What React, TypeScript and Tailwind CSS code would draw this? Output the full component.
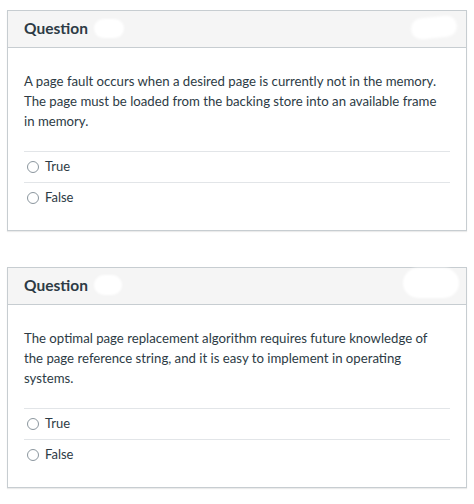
import React from 'react';

interface QuestionProps {
  text: string;
  blobLeft: string;
  blobRight: string;
}

const Blob = ({ className }: { className: string }) => (
  <div className={`absolute bg-white rounded-full blur-[1px] ${className}`} />
);

const Option = ({ label }: { label: string }) => (
  <div className="border-t border-[#e2e5e8] h-[31px] flex items-center pl-[3px]">
    <span className="w-[12px] h-[12px] rounded-full border border-[#8b969e] bg-white shrink-0" />
    <span className="ml-[6px] text-[13px] text-[#2d3b45]">{label}</span>
  </div>
);

const QuestionCard: React.FC<QuestionProps> = ({ text, blobLeft, blobRight }) => (
  <div className="w-[460px] border border-[#c7cdd1] bg-white shadow-[0_1px_1px_rgba(0,0,0,0.08)]">
    <div className="relative h-[37px] bg-[#f5f5f5] border-b border-[#c7cdd1] flex items-center px-[16px]">
      <span className="text-[15.5px] font-bold text-[#2d3b45] leading-none -mt-[1px]">Question</span>
      <Blob className={blobLeft} />
      <Blob className={blobRight} />
    </div>
    <div className="px-[16px] pt-[23px] pb-[17px]">
      <p className="text-[13.2px] leading-[20px] text-[#2d3b45] pr-[8px]">{text}</p>
      <div className="mt-[20px]">
        <Option label="True" />
        <Option label="False" />
      </div>
    </div>
  </div>
);

export default function App() {
  return (
    <div
      className="w-[474px] h-[504px] bg-white pt-[10px] pl-[7px] flex flex-col gap-[36px]"
      style={{ fontFamily: 'Lato, "Open Sans", sans-serif' }}
    >
      <QuestionCard
        text="A page fault occurs when a desired page is currently not in the memory. The page must be loaded from the backing store into an available frame in memory."
        blobLeft="left-[86px] top-[8px] w-[30px] h-[19px]"
        blobRight="left-[403px] top-[6px] w-[46px] h-[21px] -rotate-6"
      />
      <QuestionCard
        text="The optimal page replacement algorithm requires future knowledge of the page reference string, and it is easy to implement in operating systems."
        blobLeft="left-[86px] top-[7px] w-[28px] h-[20px]"
        blobRight="left-[395px] top-[0px] w-[56px] h-[30px]"
      />
    </div>
  );
}
